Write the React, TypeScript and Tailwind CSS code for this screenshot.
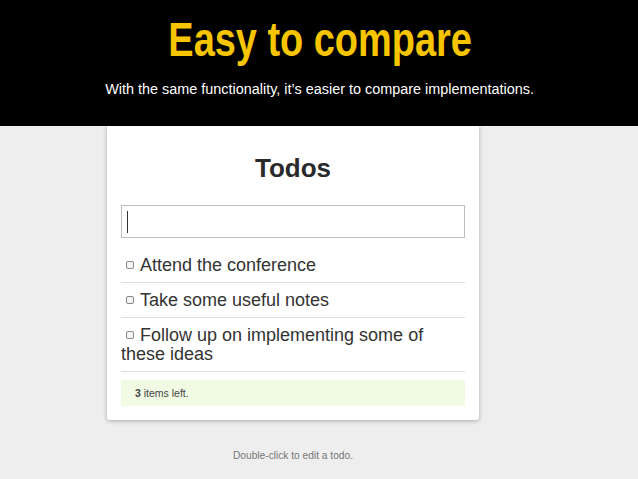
const todos = ["Attend the conference", "Take some useful notes", "Follow up on implementing some of these ideas"];

export default function App() {
  return (
    <div className="flex h-[479px] w-[638px] flex-col overflow-hidden bg-[#eeeeee] font-['Liberation_Sans',Arial,sans-serif]">
      <header className="relative z-10 flex h-[126px] shrink-0 flex-col items-center bg-black">
        {/* condensed display face isn't installed, so squeeze Arial bold */}
        <h1 className="mt-[12px] ml-[2px] scale-x-[0.79] whitespace-nowrap text-[48px] font-bold leading-[56px] text-[#f7c500]">
          Easy to compare
        </h1>
        <p className="mt-[11px] ml-[1px] scale-x-[0.93] whitespace-nowrap text-[15.5px] leading-[20px] text-white">
          With the same functionality, it’s easier to compare implementations.
        </p>
      </header>

      <section className="ml-[107px] w-[372px] rounded-b-[3px] bg-white px-[14px] pb-[14px] shadow-[0_1px_4px_rgba(0,0,0,0.3)]">
        <h2 className="pt-[27px] text-center text-[26px] font-bold leading-[30px] text-[#2a2a2a]">Todos</h2>
        <div className="mt-[22px] flex h-[33px] items-center border border-[#bdbdbd] px-[5px]">
          <span className="h-[22px] w-px bg-[#333]" />
        </div>
        <ul className="mt-[10px] text-[18px] leading-[19px] text-[#333]">
          {todos.map((todo) => (
            <li key={todo} className="border-b border-[#dddddd] pb-[7px] pt-[8px]">
              <span className="mr-[6px] inline-block h-[8px] w-[8px] translate-x-[5px] rounded-[2px] border border-[#888] bg-[#f4f4f4] align-[2px]" />
              <span className="ml-[5px]">{todo}</span>
            </li>
          ))}
        </ul>
        <div className="mt-[8px] h-[26px] bg-[#f1fbe4] pl-[14px] text-[10.5px] leading-[26px] text-[#444]">
          <b>3</b> items left.
        </div>
      </section>

      <p className="mt-[28px] ml-[107px] w-[372px] text-center text-[10.2px] text-[#777]">Double-click to edit a todo.</p>
    </div>
  );
}
